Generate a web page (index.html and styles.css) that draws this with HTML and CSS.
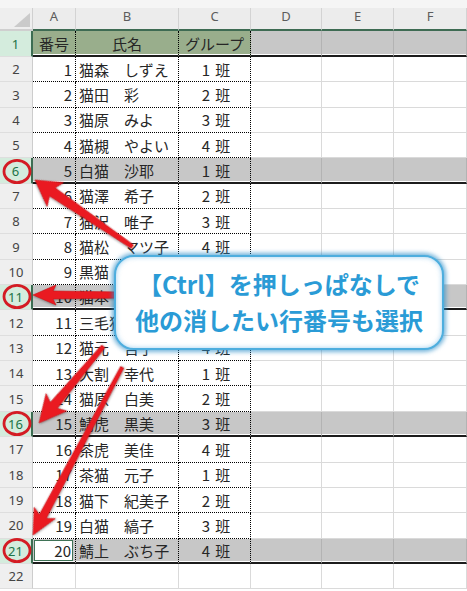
FILE: index.html
```html
<!DOCTYPE html>
<html lang="ja">
<head>
<meta charset="utf-8">
<title>行の複数選択</title>
<link rel="stylesheet" href="styles.css">
</head>
<body>
<div class="sheet">
  <div class="topbar"></div>
  <div class="row colhdr">
    <div class="corner"></div>
    <div class="ch">A</div><div class="ch">B</div><div class="ch">C</div><div class="ch">D</div><div class="ch">E</div><div class="ch">F</div>
  </div>
  <div class="row r1 sel">
    <div class="rh">1</div>
    <div class="c t hd">番号</div><div class="c t hd">氏名</div><div class="c t hd">グループ</div>
    <div class="c"></div><div class="c"></div><div class="c"></div>
  </div>
  <div class="row"><div class="rh">2</div><div class="c t num">1</div><div class="c t name">猫森　しずえ</div><div class="c t grp">1 班</div><div class="c"></div><div class="c"></div><div class="c"></div></div>
  <div class="row"><div class="rh">3</div><div class="c t num">2</div><div class="c t name">猫田　彩</div><div class="c t grp">2 班</div><div class="c"></div><div class="c"></div><div class="c"></div></div>
  <div class="row"><div class="rh">4</div><div class="c t num">3</div><div class="c t name">猫原　みよ</div><div class="c t grp">3 班</div><div class="c"></div><div class="c"></div><div class="c"></div></div>
  <div class="row"><div class="rh">5</div><div class="c t num">4</div><div class="c t name">猫槻　やよい</div><div class="c t grp">4 班</div><div class="c"></div><div class="c"></div><div class="c"></div></div>
  <div class="row sel"><div class="rh">6</div><div class="c t num">5</div><div class="c t name">白猫　沙耶</div><div class="c t grp">1 班</div><div class="c"></div><div class="c"></div><div class="c"></div></div>
  <div class="row"><div class="rh">7</div><div class="c t num">6</div><div class="c t name">猫澤　希子</div><div class="c t grp">2 班</div><div class="c"></div><div class="c"></div><div class="c"></div></div>
  <div class="row"><div class="rh">8</div><div class="c t num">7</div><div class="c t name">猫沢　唯子</div><div class="c t grp">3 班</div><div class="c"></div><div class="c"></div><div class="c"></div></div>
  <div class="row"><div class="rh">9</div><div class="c t num">8</div><div class="c t name">猫松　マツ子</div><div class="c t grp">4 班</div><div class="c"></div><div class="c"></div><div class="c"></div></div>
  <div class="row"><div class="rh">10</div><div class="c t num">9</div><div class="c t name">黒猫　ミケ</div><div class="c t grp">1 班</div><div class="c"></div><div class="c"></div><div class="c"></div></div>
  <div class="row sel"><div class="rh">11</div><div class="c t num">10</div><div class="c t name">猫本　花子</div><div class="c t grp">2 班</div><div class="c"></div><div class="c"></div><div class="c"></div></div>
  <div class="row"><div class="rh">12</div><div class="c t num">11</div><div class="c t name">三毛猫　玉</div><div class="c t grp">3 班</div><div class="c"></div><div class="c"></div><div class="c"></div></div>
  <div class="row"><div class="rh">13</div><div class="c t num">12</div><div class="c t name">猫元　吉子</div><div class="c t grp">4 班</div><div class="c"></div><div class="c"></div><div class="c"></div></div>
  <div class="row"><div class="rh">14</div><div class="c t num">13</div><div class="c t name">大割　幸代</div><div class="c t grp">1 班</div><div class="c"></div><div class="c"></div><div class="c"></div></div>
  <div class="row"><div class="rh">15</div><div class="c t num">14</div><div class="c t name">猫原　白美</div><div class="c t grp">2 班</div><div class="c"></div><div class="c"></div><div class="c"></div></div>
  <div class="row sel"><div class="rh">16</div><div class="c t num">15</div><div class="c t name">鯖虎　黒美</div><div class="c t grp">3 班</div><div class="c"></div><div class="c"></div><div class="c"></div></div>
  <div class="row"><div class="rh">17</div><div class="c t num">16</div><div class="c t name">茶虎　美佳</div><div class="c t grp">4 班</div><div class="c"></div><div class="c"></div><div class="c"></div></div>
  <div class="row"><div class="rh">18</div><div class="c t num">17</div><div class="c t name">茶猫　元子</div><div class="c t grp">1 班</div><div class="c"></div><div class="c"></div><div class="c"></div></div>
  <div class="row"><div class="rh">19</div><div class="c t num">18</div><div class="c t name">猫下　紀美子</div><div class="c t grp">2 班</div><div class="c"></div><div class="c"></div><div class="c"></div></div>
  <div class="row"><div class="rh">20</div><div class="c t num">19</div><div class="c t name">白猫　縞子</div><div class="c t grp">3 班</div><div class="c"></div><div class="c"></div><div class="c"></div></div>
  <div class="row sel"><div class="rh">21</div><div class="c t num act"><span class="cur">20</span></div><div class="c t name">鯖上　ぶち子</div><div class="c t grp">4 班</div><div class="c"></div><div class="c"></div><div class="c"></div></div>
  <div class="row"><div class="rh">22</div><div class="c"></div><div class="c"></div><div class="c"></div><div class="c"></div><div class="c"></div><div class="c"></div></div>

  <svg class="marks" width="467" height="591" viewBox="0 0 467 591" xmlns="http://www.w3.org/2000/svg">
    <g class="rings">
      <ellipse cx="17" cy="171.5" rx="13" ry="11.2"/>
      <ellipse cx="17" cy="296.5" rx="13" ry="11.2"/>
      <ellipse cx="17" cy="423.5" rx="13" ry="11.2"/>
      <ellipse cx="17" cy="550.5" rx="13" ry="11.2"/>
    </g>
    <g class="arrows">
      <polygon transform="translate(35 180) rotate(34.4)" points="0,0 25,-14 21,-5 118,-2 118,2 21,5 25,15"/>
      <polygon transform="translate(33 295)" points="0,0 23,-10 20,-4 90,-3 90,3 20,4 23,10"/>
      <polygon transform="translate(39 423) rotate(-50)" points="0,0 27,-13.5 23,-4.5 100,-2 100,2 23,4.5 27,13.5"/>
      <polygon transform="translate(33 535) rotate(-62)" points="0,0 25,-12 21,-4 190,-1.8 190,1.8 21,4 25,12"/>
    </g>
  </svg>

  <div class="bubble">
    <p class="line">【Ctrl】を押しっぱなしで</p>
    <p class="line">他の消したい行番号も選択</p>
  </div>
</div>
</body>
</html>
```

FILE: styles.css
```css
:root {
  --cols: 33px 43px 103px 72px 71px 72px 73px;
}

html, body {
  margin: 0;
  padding: 0;
  background: #ffffff;
  overflow: hidden;
}

body {
  font-family: "Noto Sans CJK JP", "Noto Sans", sans-serif;
}

.sheet {
  position: relative;
  width: 467px;
  height: 591px;
  overflow: hidden;
}

.topbar {
  height: 8px;
  background: #f5f5f5;
}

.row {
  display: grid;
  grid-template-columns: var(--cols);
  height: 25.35px;
}

.row > div {
  box-sizing: border-box;
  display: flex;
  align-items: center;
  overflow: hidden;
  white-space: nowrap;
}

/* column header row */
.colhdr {
  height: 23px;
}

.corner {
  position: relative;
  background: #eeeeee;
  border-right: 1px solid #d0d0d0;
  border-bottom: 2px solid #cfcfcf;
}

.corner::after {
  content: "";
  position: absolute;
  right: 2px;
  bottom: 2px;
  border-style: solid;
  border-width: 0 0 14px 16px;
  border-color: transparent transparent #cacaca transparent;
}

.ch {
  background: #ececec;
  border-right: 1px solid #d3d3d3;
  border-bottom: 2px solid #3e6b53;
  justify-content: center;
  padding-bottom: 5px;
  font-family: "Noto Sans", "Liberation Sans", sans-serif;
  font-size: 13px;
  color: #5c5c5c;
}

/* row headers */
.rh {
  background: #efefef;
  border-right: 1px solid #cdcdcd;
  border-bottom: 1px solid #dedede;
  justify-content: center;
  font-family: "Noto Sans", "Liberation Sans", sans-serif;
  font-size: 13px;
  color: #444444;
}

/* cells */
.c {
  border-right: 1px solid #dadada;
  border-bottom: 1px solid #dadada;
  font-size: 15px;
  color: #262626;
}

.c.t {
  border-right: 1px dotted #000000;
  border-bottom: 1px dotted #000000;
}

.hd {
  justify-content: center;
}

.num {
  justify-content: flex-end;
  padding-right: 3px;
}

.name {
  padding-left: 3px;
}

.grp {
  justify-content: center;
  padding-left: 3px;
  word-spacing: 2px;
}

/* selected rows */
.r1 {
  height: 26px;
}

.sel .c {
  background: #c7c7c7;
  border-bottom: 2px solid #1c1c1c;
  box-shadow: inset 0 -1px 0 #ffffff;
}

.sel .c:not(.t) {
  border-right-color: #b3b3b3;
}

.r1 .c.t {
  background: #99ae8c;
}

.sel .rh {
  background: #d4ecdd;
  color: #217346;
  border-right: 2px solid #3d6d53;
}

/* active cell */
.act {
  align-items: stretch !important;
  padding: 1px 2px 1px 1px;
}

.cur {
  flex: 1;
  display: flex;
  align-items: center;
  justify-content: flex-end;
  padding-right: 1px;
  background: #ffffff;
  border: 1px solid #3f7356;
}

/* overlay marks */
.marks {
  position: absolute;
  left: 0;
  top: 0;
  pointer-events: none;
}

.rings ellipse {
  fill: none;
  stroke: #d41c24;
  stroke-width: 2.8;
}

.arrows polygon {
  fill: #ea1a21;
  stroke: #d01016;
  stroke-width: 0.6;
  stroke-linejoin: round;
  filter: drop-shadow(0.5px 1px 1px rgba(0, 0, 0, 0.35));
}

/* callout bubble */
.bubble {
  position: absolute;
  left: 114px;
  top: 255px;
  width: 330px;
  height: 95px;
  box-sizing: border-box;
  padding-top: 9px;
  background: #ffffff;
  border: 2px solid #4eaede;
  border-radius: 20px;
  box-shadow: 0 0 4px 2px rgba(40, 140, 200, 0.65), inset 0 0 5px rgba(80, 170, 225, 0.55);
  text-align: center;
}

.line {
  margin: 0;
  font-family: "Noto Sans CJK JP", sans-serif;
  font-weight: 700;
  font-size: 24px;
  line-height: 36px;
  color: #2a9bd6;
  white-space: nowrap;
}
```
